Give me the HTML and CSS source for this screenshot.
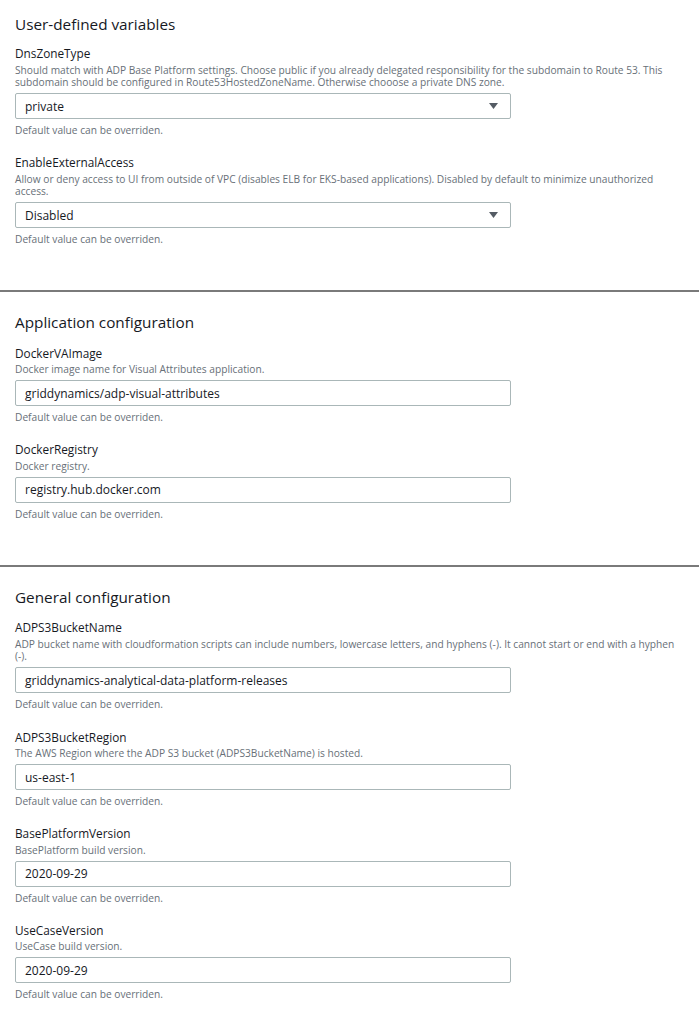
FILE: index.html
```html
<!DOCTYPE html>
<html lang="en">
<head>
<meta charset="utf-8">
<title>Parameters</title>
<link rel="stylesheet" href="styles.css">
</head>
<body>
<div class="page">
  <section class="panel">
    <h2 class="panel-title">User-defined variables</h2>
    <div class="field">
      <div class="label">DnsZoneType</div>
      <div class="desc">Should match with ADP Base Platform settings. Choose public if you already delegated responsibility for the subdomain to Route 53. This subdomain should be configured in Route53HostedZoneName. Otherwise chooose a private DNS zone.</div>
      <div class="control select"><span class="value">private</span><svg class="caret" width="9" height="6" viewBox="0 0 9 6"><path d="M0 0H9L4.5 6Z" fill="#545b64"/></svg></div>
      <div class="hint">Default value can be overriden.</div>
    </div>
    <div class="field">
      <div class="label">EnableExternalAccess</div>
      <div class="desc">Allow or deny access to UI from outside of VPC (disables ELB for EKS-based applications). Disabled by default to minimize unauthorized access.</div>
      <div class="control select"><span class="value">Disabled</span><svg class="caret" width="9" height="6" viewBox="0 0 9 6"><path d="M0 0H9L4.5 6Z" fill="#545b64"/></svg></div>
      <div class="hint">Default value can be overriden.</div>
    </div>
  </section>
  <section class="panel">
    <h2 class="panel-title">Application configuration</h2>
    <div class="field">
      <div class="label">DockerVAImage</div>
      <div class="desc">Docker image name for Visual Attributes application.</div>
      <div class="control"><span class="value">griddynamics/adp-visual-attributes</span></div>
      <div class="hint">Default value can be overriden.</div>
    </div>
    <div class="field">
      <div class="label">DockerRegistry</div>
      <div class="desc">Docker registry.</div>
      <div class="control"><span class="value">registry.hub.docker.com</span></div>
      <div class="hint">Default value can be overriden.</div>
    </div>
  </section>
  <section class="panel">
    <h2 class="panel-title">General configuration</h2>
    <div class="field">
      <div class="label">ADPS3BucketName</div>
      <div class="desc">ADP bucket name with cloudformation scripts can include numbers, lowercase letters, and hyphens (-). It cannot start or end with a hyphen (-).</div>
      <div class="control"><span class="value">griddynamics-analytical-data-platform-releases</span></div>
      <div class="hint">Default value can be overriden.</div>
    </div>
    <div class="field">
      <div class="label">ADPS3BucketRegion</div>
      <div class="desc">The AWS Region where the ADP S3 bucket (ADPS3BucketName) is hosted.</div>
      <div class="control"><span class="value">us-east-1</span></div>
      <div class="hint">Default value can be overriden.</div>
    </div>
    <div class="field">
      <div class="label">BasePlatformVersion</div>
      <div class="desc">BasePlatform build version.</div>
      <div class="control"><span class="value">2020-09-29</span></div>
      <div class="hint">Default value can be overriden.</div>
    </div>
    <div class="field">
      <div class="label">UseCaseVersion</div>
      <div class="desc">UseCase build version.</div>
      <div class="control"><span class="value">2020-09-29</span></div>
      <div class="hint">Default value can be overriden.</div>
    </div>
  </section>
</div>
</body>
</html>
```

FILE: styles.css
```css
html, body {
  margin: 0;
  padding: 0;
  background: #ffffff;
}

body {
  font-family: "Open Sans", "Noto Sans", "Liberation Sans", sans-serif;
  color: #16191f;
}

.page {
  display: flex;
  flex-direction: column;
}

.panel {
  padding: 13px 15px 44px 15px;
}

.panel + .panel {
  border-top: 2px solid #7a7a7a;
  padding-top: 19px;
}

.panel-title {
  margin: 0 0 10px 0;
  font-size: 15.3px;
  line-height: 22px;
  font-weight: 400;
  color: #16191f;
}

.panel + .panel .panel-title {
  margin-bottom: 11.5px;
}

.field {
  display: flex;
  flex-direction: column;
}

.field + .field {
  margin-top: 17.2px;
}

.label {
  font-size: 11.8px;
  line-height: 16px;
  color: #16191f;
}

.desc {
  margin-top: 2.5px;
  font-size: 10.2px;
  line-height: 12.5px;
  color: #687078;
}

.control {
  margin-top: 4.5px;
  box-sizing: border-box;
  width: 496px;
  height: 26px;
  border: 1px solid #aab7b8;
  border-radius: 2px;
  display: flex;
  align-items: center;
  justify-content: space-between;
  padding: 0 12px 0 9px;
}

.value {
  font-size: 12px;
  color: #16191f;
}

.caret {
  display: block;
}

.hint {
  margin-top: 4px;
  font-size: 10.2px;
  line-height: 14px;
  color: #687078;
}
```
